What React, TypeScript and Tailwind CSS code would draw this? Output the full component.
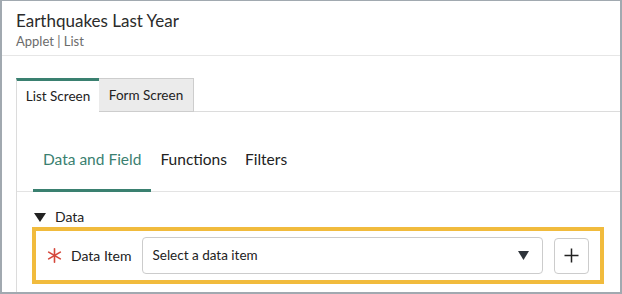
const teal = "#3a8070";

function Asterisk() {
	return (
		<svg width="15" height="15" viewBox="0 0 15 15" className="shrink-0">
			<g stroke="#d5463a" strokeWidth="1.6" strokeLinecap="round">
				<line x1="7.5" y1="0.8" x2="7.5" y2="14.2" />
				<line x1="1.7" y1="4.1" x2="13.3" y2="10.9" />
				<line x1="1.7" y1="10.9" x2="13.3" y2="4.1" />
			</g>
		</svg>
	);
}

export default function App() {
	return (
		<div
			className="h-[294px] w-[622px] overflow-hidden border-t border-r-2 border-b-2 border-l-2 border-[#a1a9b0] bg-white text-[#222]"
			style={{ fontFamily: "Lato, 'Open Sans', sans-serif" }}
		>
			{/* Header */}
			<header className="h-[55px] border-b border-[#e6e6e6] px-[14px] pt-[9px]">
				<h1 className="text-[17px] leading-[22px] text-[#2b2b2b]">Earthquakes Last Year</h1>
				<p className="text-[13px] leading-[18px] text-[#6b6b6b]">Applet | List</p>
			</header>

			<div className="pt-[22px] pl-[14px]">
				{/* Screen tabs */}
				<div className="flex items-end text-[13.5px]">
					<div className="flex h-[34px] w-[83px] items-center justify-center border-t-[3px] border-l border-t-[#3a8070] border-l-[#dcdcdc]">
						List Screen
					</div>
					<div className="flex h-[34px] w-[95px] items-center justify-center border-t border-r border-b border-[#cdcdcd] bg-[#ebebeb]">
						Form Screen
					</div>
					<div className="flex-1 border-b border-[#dcdcdc]" />
				</div>

				{/* Panel */}
				<div className="h-[200px] border-l border-[#dcdcdc]">
					<div className="flex border-b border-[#e3e3e3] pt-[35px] pl-[16px] text-[15.5px] leading-[24px]">
						<div className="-mb-px border-b-[3px] px-[10px] pb-[18px]" style={{ color: teal, borderColor: teal }}>
							Data and Field
						</div>
						<div className="-mb-px border-b-[3px] border-transparent px-[9px] pb-[18px]">Functions</div>
						<div className="-mb-px border-b-[3px] border-transparent px-[9px] pb-[18px]">Filters</div>
					</div>

					<div className="px-[15px] pt-[15px]">
						<div className="flex items-center gap-[9px] pl-[2px] text-[14px] leading-[20px]">
							<svg width="12" height="9" viewBox="0 0 12 9">
								<path d="M0 0 H12 L6 9 Z" fill="#222" />
							</svg>
							<span>Data</span>
						</div>

						<div className="flex w-[572px] items-center border-4 border-[#f1bb3d] py-[6px] pr-[11px] pl-[11px]">
							<Asterisk />
							<span className="ml-[9px] text-[14px] leading-[20px]">Data Item</span>
							<div className="ml-[10px] flex h-[37px] flex-1 items-center justify-between rounded-[4px] border border-[#cccccc] pr-[13px] pl-[10px] text-[13.5px]">
								<span>Select a data item</span>
								<svg width="11" height="9" viewBox="0 0 11 9">
									<path d="M0 0 H11 L5.5 9 Z" fill="#2e333a" />
								</svg>
							</div>
							<div className="ml-[11px] flex h-[36px] w-[35px] items-center justify-center rounded-[4px] border border-[#cccccc]">
								<svg width="15" height="15" viewBox="0 0 15 15">
									<path d="M7.5 0.5 V14.5 M0.5 7.5 H14.5" stroke="#222" strokeWidth="1.5" />
								</svg>
							</div>
						</div>
					</div>
				</div>
			</div>
		</div>
	);
}
